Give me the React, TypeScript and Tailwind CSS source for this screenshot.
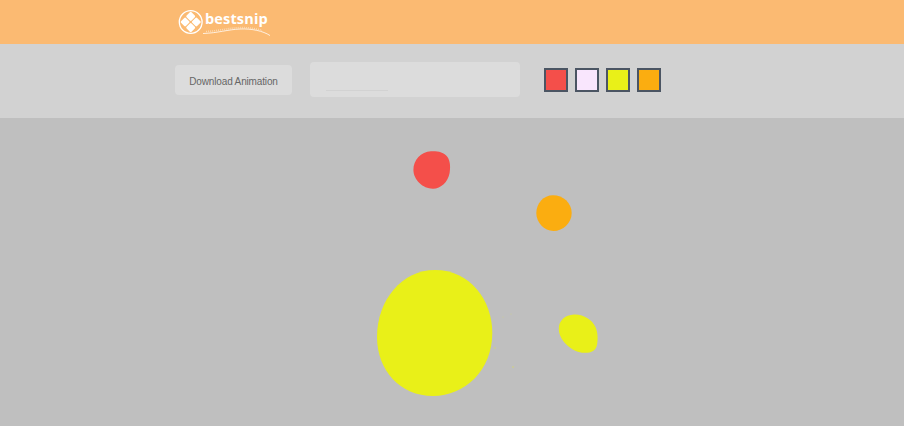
export default function App() {
  return (
    <div className="w-[904px] h-[426px] overflow-hidden flex flex-col bg-[#bfbfbf] font-['Liberation_Sans',Arial,sans-serif]">
      <header className="h-[44px] shrink-0 bg-[#fbba72] pl-[178px] flex items-center">
        <div className="relative w-[94px] h-[44px]">
          <svg width="94" height="44" viewBox="0 0 94 44" className="absolute left-0 top-0">
            <circle cx="12.7" cy="22" r="11.4" fill="none" stroke="#fff" strokeWidth="1.3" />
            <g fill="#fff">
              <rect x="9.2" y="12.9" width="7" height="7" rx="1.2" transform="rotate(45 12.7 16.4)" />
              <rect x="3.6" y="18.5" width="7" height="7" rx="1.2" transform="rotate(45 7.1 22)" />
              <rect x="14.8" y="18.5" width="7" height="7" rx="1.2" transform="rotate(45 18.3 22)" />
              <rect x="9.2" y="24.1" width="7" height="7" rx="1.2" transform="rotate(45 12.7 27.6)" />
            </g>
            <path d="M25 33.5 C 40 33, 50 29.5, 62 29 C 74 28.5, 85 31, 92 35.5" fill="none" stroke="#fff" strokeOpacity="0.85" strokeWidth="0.9" />
            <path d="M28 31.5 C 40 31, 50 28, 62 27.6 C 70 27.4, 78 28.5, 84 30.5" fill="none" stroke="#fff" strokeOpacity="0.45" strokeWidth="1.6" strokeDasharray="1 1" />
          </svg>
          <span className="absolute left-[27px] top-[9px] text-[14.5px] leading-[20px] font-bold tracking-[0.15px] text-white font-['Open_Sans',sans-serif]">bestsnip</span>
        </div>
      </header>
      <div className="h-[74px] shrink-0 bg-[#d2d2d2] pl-[175px] flex items-center">
        <button className="w-[117px] h-[30px] mb-[2px] pt-[3px] rounded-[4px] bg-[#dcdcdc] text-[#666] text-[10px] tracking-[-0.15px]">Download Animation</button>
        <div className="relative ml-[18px] w-[210px] h-[35px] mb-[3px] rounded-[4px] bg-[#dcdcdc]">
          <div className="absolute left-[16px] bottom-[6px] w-[62px] h-px bg-[#d2d2d2]" />
        </div>
        <div className="ml-[24px] mb-[2px] flex gap-[7px]">
          <div className="w-[24px] h-[24px] border-2 border-[#4b5563] bg-[#f44f4a]" />
          <div className="w-[24px] h-[24px] border-2 border-[#4b5563] bg-[#f9e6fd]" />
          <div className="w-[24px] h-[24px] border-2 border-[#4b5563] bg-[#e9f018]" />
          <div className="w-[24px] h-[24px] border-2 border-[#4b5563] bg-[#fbad10]" />
        </div>
      </div>
      <main className="flex-1 min-h-0">
        <svg width="904" height="308" viewBox="0 118 904 308" className="block">
          <path d="M431 151.3 C 437 151, 444 151.8, 447.5 157 C 450.5 161.5, 450.5 168, 449.6 173 C 448 182, 441 188.7, 433 188.7 C 423 188.8, 413.6 180, 413.4 170 C 413.3 160, 421 151.8, 431 151.3 Z" fill="#f44f4a" />
          <path d="M553 195.3 C 563 195.3, 571.7 203, 571.7 213 C 571.7 223, 563 231, 553.5 231 C 544 231, 536.3 222.5, 536.3 213 C 536.3 203.5, 543.5 195.3, 553 195.3 Z" fill="#fbad10" />
          <path d="M435 270 C 470 270, 492.3 300, 492.3 333 C 492.3 370, 465 396, 433 396 C 400 396, 377 370, 377 337 C 377 300, 402 270, 435 270 Z" fill="#e9f018" />
          <path d="M574 314.6 C 584 314.2, 592 320, 595.5 327 C 598 332.5, 598 340, 597 345 C 595.5 351, 591.5 353, 584 352.8 C 574 352.8, 559 342, 558.8 329 C 558.6 321, 565 315, 574 314.6 Z" fill="#e9f018" />
          <g fill="#d4d86a">
            <circle cx="495" cy="348" r="0.7" />
            <circle cx="513" cy="367" r="0.7" />
            <circle cx="503" cy="317" r="0.4" />
            <circle cx="511" cy="314" r="0.4" />
          </g>
        </svg>
      </main>
    </div>
  );
}
